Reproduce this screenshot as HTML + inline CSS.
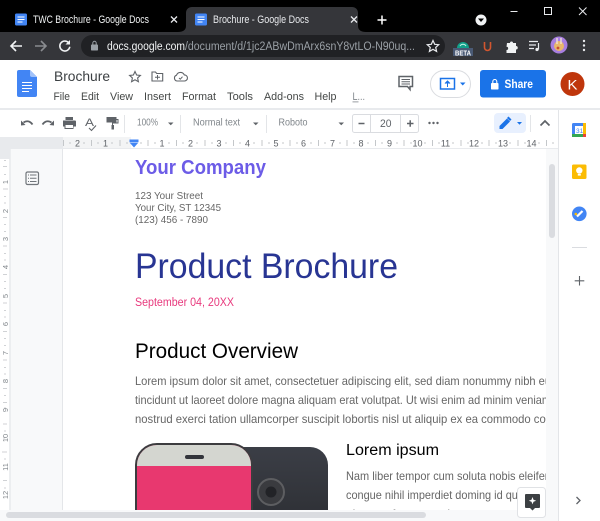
<!DOCTYPE html>
<html><head><meta charset="utf-8"><style>
html,body{margin:0;padding:0;background:#fff;overflow:hidden}
svg{display:block;filter:blur(.3px)}
text{font-family:"Liberation Sans",sans-serif;white-space:pre}
</style></head><body>
<svg xmlns="http://www.w3.org/2000/svg" width="600" height="521" viewBox="0 0 600 521">
<defs>
<clipPath id="pg"><rect x="63" y="149" width="483" height="361"/></clipPath>
<linearGradient id="dk" x1="0" y1="0" x2="0" y2="1"><stop offset="0" stop-color="#3b3e46"/><stop offset="1" stop-color="#2e3035"/></linearGradient>
</defs>
<rect width="600" height="521" fill="#fff"/>
<!-- tab strip -->
<rect width="600" height="32" fill="#000"/>
<path d="M178 32c5 0 8-2 8-6V13c0-4 3-6 6-6h160c3 0 6 2 6 6v13c0 4 3 6 8 6z" fill="#35363a"/>
<rect x="15" y="13.500" width="12" height="12" rx="1.500" fill="#4285f4"/><path d="M17.500 17h7M17.500 19.500h7M17.500 22h5" stroke="#fff" stroke-width="1.100"/>
<rect x="195" y="13.500" width="12" height="12" rx="1.500" fill="#4285f4"/><path d="M197.500 17h7M197.500 19.500h7M197.500 22h5" stroke="#fff" stroke-width="1.100"/>
<text x="33" y="23" font-size="11" fill="#f1f3f4" textLength="116" lengthAdjust="spacingAndGlyphs">TWC Brochure - Google Docs</text>
<path d="M171 16.500l6 6m0-6l-6 6" stroke="#e8eaed" stroke-width="1.300"/>
<text x="213" y="23" font-size="11" fill="#e8eaed" textLength="96" lengthAdjust="spacingAndGlyphs">Brochure - Google Docs</text>
<path d="M351 16.500l6 6m0-6l-6 6" stroke="#e8eaed" stroke-width="1.300"/>
<path d="M377.500 20h9M382 15.500v9" stroke="#fff" stroke-width="1.500"/>
<circle cx="481" cy="20" r="5.500" fill="#f1f3f4"/><path d="M478 18.500h6l-3 3.500z" fill="#000"/>
<path d="M510.500 11.500h7" stroke="#e8eaed" stroke-width="1"/>
<rect x="544.500" y="7.500" width="7" height="7" fill="none" stroke="#e8eaed"/>
<path d="M579 7.500l7.500 7.500m0-7.500L579 15" stroke="#e8eaed" stroke-width="1"/>
<!-- omnibar -->
<rect y="32" width="600" height="28" fill="#35363a"/>
<path d="M11 46h11M16 41l-5 5 5 5" fill="none" stroke="#f1f3f4" stroke-width="1.600"/>
<path d="M35 46h11M41 41l5 5-5 5" fill="none" stroke="#8a8c90" stroke-width="1.600"/>
<path d="M69 43.200a5 5 0 1 0 .8 3.600" fill="none" stroke="#f1f3f4" stroke-width="1.600"/><path d="M70 40v4.500h-4.500z" fill="#f1f3f4"/>
<rect x="81" y="35" width="364" height="22" rx="11" fill="#202124"/>
<rect x="91" y="44.500" width="7" height="6" rx=".8" fill="#9aa0a6"/><path d="M92.800 44.500v-1.500a1.700 1.700 0 0 1 3.400 0v1.500" fill="none" stroke="#9aa0a6"/>
<text x="107" y="50" font-size="11.500" fill="#f1f3f4" textLength="78" lengthAdjust="spacingAndGlyphs">docs.google.com</text>
<text x="185" y="50" font-size="11.500" fill="#9aa0a6" textLength="230" lengthAdjust="spacingAndGlyphs">/document/d/1jc2ABwDmArx6snY8vtLO-N90uq...</text>
<path d="M433 40.500l1.700 3.800 4 .4-3 2.700.9 4-3.600-2.100-3.600 2.100.9-4-3-2.700 4-.4z" fill="none" stroke="#e8eaed" stroke-width="1.200"/>
<path d="M457 48a6 6 0 0 1 12 0z" fill="#11a08a"/><path d="M460 46a3.500 3.500 0 0 1 6 0" fill="none" stroke="#bff0e4" stroke-width="1"/>
<rect x="453" y="48" width="20" height="8" fill="#4a5a75"/>
<text x="455" y="55.500" font-size="7.500" font-weight="bold" fill="#fff" textLength="16" lengthAdjust="spacingAndGlyphs">BETA</text>
<path d="M484.500 42v5.500a3 3 0 0 0 6 0V42" fill="none" stroke="#d2562f" stroke-width="1.600"/>
<path d="M507 43h3a1.500 1.500 0 0 1 3 0h3v3a1.500 1.500 0 0 1 0 3.500v3.500h-9.500v-3a1.600 1.600 0 0 0 0-3.300z" fill="#f1f3f4"/>
<path d="M529 41.500h9M529 45h7M529 48.500h5" stroke="#e8eaed" stroke-width="1.200"/><path d="M538.500 43v6.500" stroke="#e8eaed" stroke-width="1.200"/><circle cx="537" cy="49.500" r="1.600" fill="#e8eaed"/>
<circle cx="559" cy="45" r="8.500" fill="#a87fe0"/><circle cx="559" cy="46" r="5" fill="#e9b86b"/><path d="M557 38v6M561 38v6" stroke="#f3e7d6" stroke-width="1.300"/><circle cx="558" cy="48" r="1.400" fill="#c9502f"/>
<circle cx="584" cy="41" r="1.200" fill="#e8eaed"/><circle cx="584" cy="45.500" r="1.200" fill="#e8eaed"/><circle cx="584" cy="50" r="1.200" fill="#e8eaed"/>
<!-- header -->
<path d="M19 70h11l7 7v18a2 2 0 0 1-2 2H19a2 2 0 0 1-2-2V72a2 2 0 0 1 2-2z" fill="#4285f4"/><path d="M30 70l7 7h-5a2 2 0 0 1-2-2z" fill="#a1c2fa"/>
<path d="M22 82.500h10M22 85.500h10M22 88.500h10M22 91.500h7" stroke="#fff" stroke-width="1.100"/>
<text x="54" y="81" font-size="14" fill="#3c4043" textLength="56" lengthAdjust="spacingAndGlyphs">Brochure</text>
<path d="M135 71.500l1.600 3.500 3.800.4-2.800 2.600.8 3.700-3.400-1.900-3.400 1.900.8-3.700-2.800-2.600 3.800-.4z" fill="none" stroke="#5f6368" stroke-width="1.100"/>
<path d="M152 72h3.500l1.200 1.500h6v7.500h-10.700z" fill="none" stroke="#5f6368" stroke-width="1.100"/><path d="M157.500 75v4.500M155 77.200h5" stroke="#5f6368"/>
<path d="M177 81a3 3 0 0 1-.5-5.800 4.200 4.200 0 0 1 7.800-.3 3 3 0 0 1 .2 6.100z" fill="none" stroke="#5f6368" stroke-width="1.100"/><path d="M179 78l1.300 1.200 2.200-2.500" fill="none" stroke="#5f6368"/>
<g font-size="11" fill="#444746">
<text x="53.500" y="100" textLength="16.500" lengthAdjust="spacingAndGlyphs">File</text>
<text x="81" y="100" textLength="18" lengthAdjust="spacingAndGlyphs">Edit</text>
<text x="110" y="100" textLength="23" lengthAdjust="spacingAndGlyphs">View</text>
<text x="144" y="100" textLength="27" lengthAdjust="spacingAndGlyphs">Insert</text>
<text x="182" y="100" textLength="34" lengthAdjust="spacingAndGlyphs">Format</text>
<text x="227" y="100" textLength="26" lengthAdjust="spacingAndGlyphs">Tools</text>
<text x="264" y="100" textLength="40" lengthAdjust="spacingAndGlyphs">Add-ons</text>
<text x="314.500" y="100" textLength="22" lengthAdjust="spacingAndGlyphs">Help</text>
<text x="352.500" y="100" fill="#80868b" textLength="12.500" lengthAdjust="spacingAndGlyphs">L...</text>
</g>
<rect x="352.500" y="101.500" width="6" height=".8" fill="#80868b"/>
<path d="M399 76.500h13.500v10h-2.500v3l-2.500-3H399z" fill="none" stroke="#5f6368" stroke-width="1.500"/><path d="M401.500 79.500h8.500M401.500 81.700h8.500M401.500 84h8.500" stroke="#5f6368"/>
<rect x="430.500" y="70.500" width="40" height="27" rx="13.500" fill="#fff" stroke="#dadce0"/>
<rect x="440.500" y="78.500" width="14" height="10.500" fill="none" stroke="#1a73e8" stroke-width="1.500"/><path d="M447.500 87v-5M445 83.500l2.500-2.500 2.500 2.500" fill="#1a73e8" stroke="#1a73e8"/>
<path d="M460 82.500h5.500l-2.750 3z" fill="#1a73e8"/>
<rect x="480" y="70" width="66" height="27.500" rx="3" fill="#1a73e8"/>
<rect x="491" y="83" width="7.500" height="6.500" rx=".8" fill="#fff"/><path d="M492.800 83v-1.500a2 2 0 0 1 4 0V83" fill="none" stroke="#fff" stroke-width="1.100"/>
<text x="504.500" y="88" font-size="11.500" font-weight="bold" fill="#fff" textLength="28.500" lengthAdjust="spacingAndGlyphs">Share</text>
<circle cx="572.500" cy="84" r="12" fill="#bf360c"/>
<text x="567.500" y="89.500" font-size="14" fill="#fff" textLength="10" lengthAdjust="spacingAndGlyphs">K</text>
<!-- toolbar -->
<rect y="108" width="600" height="2" fill="#e8eaed"/>
<path d="M21 125.500v-5l4.500 4.500z" fill="#5f6368"/><path d="M23.500 122.500c3-2 6.500-1.500 9 2" fill="none" stroke="#5f6368" stroke-width="1.800"/>
<path d="M54 125.500v-5l-4.500 4.500z" fill="#5f6368"/><path d="M51.500 122.500c-3-2-6.500-1.500-9 2" fill="none" stroke="#5f6368" stroke-width="1.800"/>
<path d="M63 120.500h12a1 1 0 0 1 1 1v5h-2.500v2.500h-9v-2.500H63z" fill="#5f6368"/><rect x="65.500" y="117" width="7.500" height="3" fill="#5f6368"/><rect x="65.500" y="125" width="7.500" height="3" fill="#fff"/>
<text x="85" y="126" font-size="11" fill="#5f6368" textLength="9" lengthAdjust="spacingAndGlyphs">A</text><path d="M89 128l2.500 2.500 4.500-5" fill="none" stroke="#5f6368" stroke-width="1.100"/>
<rect x="106.500" y="117" width="10" height="5.500" fill="#5f6368"/><path d="M116.500 119.500h1.500v3.500h-5.500v2" fill="none" stroke="#5f6368"/><rect x="111.500" y="125" width="2.500" height="4.500" fill="#5f6368"/>
<rect x="124" y="115" width="1" height="18" fill="#e3e5e8"/><rect x="180" y="115" width="1" height="18" fill="#e3e5e8"/><rect x="266" y="115" width="1" height="18" fill="#e3e5e8"/>
<g font-size="10.500" fill="#80868b">
<text x="137" y="125.500" textLength="21" lengthAdjust="spacingAndGlyphs">100%</text>
<text x="193" y="125.500" textLength="47" lengthAdjust="spacingAndGlyphs">Normal text</text>
<text x="278.500" y="125.500" textLength="29" lengthAdjust="spacingAndGlyphs">Roboto</text>
</g>
<path d="M168 122.500h5.500l-2.750 2.700zM253 122.500h5.500l-2.750 2.700zM338.500 122.500h5.500l-2.750 2.700z" fill="#5f6368"/>
<rect x="352.500" y="114.500" width="66" height="18" rx="2" fill="#fff" stroke="#dadce0"/><path d="M370.500 114.500v18M400.500 114.500v18" stroke="#dadce0"/>
<text x="380" y="127" font-size="11" fill="#5f6368" textLength="11.500" lengthAdjust="spacingAndGlyphs">20</text>
<path d="M358.500 123.500h6M407 123.500h6.500M410.200 120.300v6.500" stroke="#5f6368" stroke-width="1.500"/>
<circle cx="429.500" cy="123" r="1.200" fill="#5f6368"/><circle cx="433.500" cy="123" r="1.200" fill="#5f6368"/><circle cx="437.500" cy="123" r="1.200" fill="#5f6368"/>
<rect x="494" y="113" width="32" height="20" rx="4" fill="#e8f0fe"/>
<path d="M499.500 129v-3l7.500-7.500 3 3-7.500 7.500z" fill="#1a73e8"/><path d="M507 118l1.500-1.500 3 3-1.500 1.500z" fill="#1a73e8"/>
<path d="M517 122h5l-2.500 2.700z" fill="#1a73e8"/>
<rect x="530" y="115" width="1" height="17" fill="#e3e5e8"/>
<path d="M540.500 125.500l4.500-4.500 4.500 4.500" fill="none" stroke="#5f6368" stroke-width="1.700"/>
<!-- ruler -->
<rect y="137" width="63" height="12" fill="#e8eaed"/>
<rect x="63" y="137" width="495" height="12" fill="#fff"/>
<rect x="63" y="137" width="68" height="11" fill="#f3f4f5"/>
<rect y="148" width="558" height="1" fill="#e8eaed"/>
<g stroke="#c4c7ca" stroke-width="1">
<path d="M63.500 140v6M91.500 140v6M120 140v6M148 140v6M176.500 140v6M205 140v6M233.500 140v6M262 140v6M290 140v6M318.500 140v6M347 140v6M375.500 140v6M404 140v6M432.500 140v6M461 140v6M489 140v6M518 140v6M546.500 140v6"/>
<path d="M70 142v2M84 142v2M98 142v2M112 142v2M127 142v2M141 142v2M155 142v2M169 142v2M183 142v2M197 142v2M212 142v2M226 142v2M240 142v2M254 142v2M269 142v2M283 142v2M297 142v2M311 142v2M325 142v2M340 142v2M354 142v2M368 142v2M382 142v2M397 142v2M411 142v2M425 142v2M439 142v2M453 142v2M468 142v2M482 142v2M496 142v2M510 142v2M525 142v2M539 142v2M553 142v2"/>
</g>
<g font-size="9" fill="#5f6368" text-anchor="middle">
<text x="77.500" y="146.500">2</text><text x="105.500" y="146.500">1</text><text x="162" y="146.500">1</text><text x="190.500" y="146.500">2</text><text x="219" y="146.500">3</text><text x="247.500" y="146.500">4</text><text x="276" y="146.500">5</text><text x="303.500" y="146.500">6</text><text x="332.500" y="146.500">7</text><text x="361" y="146.500">8</text><text x="389.500" y="146.500">9</text><text x="417.500" y="146.500">10</text><text x="445.500" y="146.500">11</text><text x="474" y="146.500">12</text><text x="503" y="146.500">13</text><text x="531.500" y="146.500">14</text>
</g>
<path d="M129.500 139.500h9v2.500h-9z" fill="#4285f4"/><path d="M129.500 142.500h9l-4.500 5z" fill="#4285f4"/>
<!-- left -->
<rect y="149" width="10" height="361" fill="#fff"/>
<rect x="10" y="149" width="52" height="361" fill="#f8f9fa"/>
<rect x="9" y="149" width="2" height="361" fill="#eceef0"/>
<rect x="62" y="149" width="1" height="361" fill="#e4e6e9"/>
<rect y="149" width="10" height="10" fill="#e8eaed"/>
<rect x="26" y="172" width="12.500" height="12.500" rx="1.500" fill="none" stroke="#70757a" stroke-width="1.200"/>
<path d="M28 175h1M30 175h6.500M28 178.200h1M30 178.200h6.500M28 181.500h1M30 181.500h6.500" stroke="#70757a"/>
<g stroke="#d0d2d5">
<path d="M4 160.500h2M3 166.500h4M4 174.500h2M3 189h5M4 196.500h2M4 203h2M3 217.500h4M4 224.500h2M4 231.500h2M3 246h4M4 253.500h2M4 260h2M3 274.500h4M4 281.500h2M4 288.500h2M3 303h4M4 310.500h2M4 317h2M3 331.500h4M4 338.500h2M4 345.500h2M3 360h4M4 367.500h2M4 374h2M3 388.500h4M4 395.500h2M3 402.500h4M4 408h2M3 424h4M4 431h2M3 438h2M2 452h5M4 459h2M3 480.500h4M4 488h2"/>
</g>
<g font-size="7.500" fill="#80868b" text-anchor="middle">
<text transform="translate(8,182) rotate(-90)">1</text>
<text transform="translate(8,211) rotate(-90)">2</text>
<text transform="translate(8,239) rotate(-90)">3</text>
<text transform="translate(8,267) rotate(-90)">4</text>
<text transform="translate(8,296) rotate(-90)">5</text>
<text transform="translate(8,324) rotate(-90)">6</text>
<text transform="translate(8,353) rotate(-90)">7</text>
<text transform="translate(8,381) rotate(-90)">8</text>
<text transform="translate(8,410) rotate(-90)">9</text>
<text transform="translate(8,438) rotate(-90)">10</text>
<text transform="translate(8,467) rotate(-90)">11</text>
<text transform="translate(8,495) rotate(-90)">12</text>
</g>
<!-- page -->
<g clip-path="url(#pg)">
<text x="135" y="174" font-size="20" font-weight="bold" fill="#6c5ce7" textLength="131" lengthAdjust="spacingAndGlyphs">Your Company</text>
<g font-size="10.500" fill="#666">
<text x="135" y="199" textLength="68" lengthAdjust="spacingAndGlyphs">123 Your Street</text>
<text x="135" y="211" textLength="86" lengthAdjust="spacingAndGlyphs">Your City, ST 12345</text>
<text x="135" y="223" textLength="73" lengthAdjust="spacingAndGlyphs">(123) 456 - 7890</text>
</g>
<text x="135" y="278" font-size="35" fill="#283593" textLength="263" lengthAdjust="spacingAndGlyphs">Product Brochure</text>
<text x="135" y="306" font-size="11.500" fill="#e8397d" textLength="99" lengthAdjust="spacingAndGlyphs">September 04, 20XX</text>
<text x="135" y="358" font-size="21.500" fill="#000" textLength="163" lengthAdjust="spacingAndGlyphs">Product Overview</text>
<g font-size="12" fill="#666">
<text x="135" y="385" textLength="416" lengthAdjust="spacingAndGlyphs">Lorem ipsum dolor sit amet, consectetuer adipiscing elit, sed diam nonummy nibh eu</text>
<text x="135" y="404" textLength="416" lengthAdjust="spacingAndGlyphs">tincidunt ut laoreet dolore magna aliquam erat volutpat. Ut wisi enim ad minim veniam</text>
<text x="135" y="423" textLength="417" lengthAdjust="spacingAndGlyphs">nostrud exerci tation ullamcorper suscipit lobortis nisl ut aliquip ex ea commodo con</text>
<text x="346" y="480" textLength="211" lengthAdjust="spacingAndGlyphs">Nam liber tempor cum soluta nobis eleifend</text>
<text x="346" y="499" textLength="184" lengthAdjust="spacingAndGlyphs">congue nihil imperdiet doming id quod</text>
<text x="346" y="518">placerat facer possim</text>
</g>
<text x="346" y="455" font-size="15.500" fill="#000" textLength="93" lengthAdjust="spacingAndGlyphs">Lorem ipsum</text>
<path d="M200 447h110a18 18 0 0 1 18 18v55H200z" fill="url(#dk)"/>
<circle cx="271" cy="492" r="13" fill="#3a3b3f" stroke="#5d5e61" stroke-width="2"/><circle cx="271" cy="492" r="5.500" fill="#222327"/>
<path d="M136 520v-55a21 21 0 0 1 21-21h74a21 21 0 0 1 21 21v55z" fill="#e8386f" stroke="#3c3c3f" stroke-width="2"/>
<path d="M137 466v-1a20 20 0 0 1 20-20h74a20 20 0 0 1 20 20v1z" fill="#d4d6d0"/>
<rect x="185" y="455" width="19" height="4" rx="2" fill="#33353b"/>
</g>
<!-- v scrollbar -->
<rect x="546" y="149" width="12" height="361" fill="#f8f9fa"/>
<rect x="549" y="164" width="6" height="74" rx="3" fill="#dadce0"/>
<!-- side panel -->
<rect x="558" y="110" width="1" height="411" fill="#e3e5e8"/>
<rect x="572" y="123" width="14" height="14" rx="1.500" fill="#4285f4"/><rect x="572" y="134" width="14" height="3" fill="#34a853"/><rect x="583" y="123" width="3" height="14" fill="#fbbc04"/><rect x="575" y="126" width="8" height="8" fill="#fff"/>
<text x="576" y="133" font-size="6.500" fill="#4285f4">31</text><rect x="583" y="134" width="3" height="3" fill="#ea4335"/>
<rect x="572" y="164.500" width="14.500" height="14.500" rx="1.500" fill="#fbbc04"/><circle cx="579.300" cy="170.500" r="3.200" fill="#fff"/><rect x="577.800" y="174" width="3" height="1.600" fill="#fff"/>
<circle cx="579.300" cy="213.800" r="7.300" fill="#4285f4"/><path d="M577 216.500l5.500-5.500" stroke="#fff" stroke-width="2.200"/><circle cx="575.800" cy="214" r="1.300" fill="#fbbc04"/>
<rect x="572" y="247" width="15" height="1" fill="#dadce0"/>
<path d="M579.500 276v9.500M574.700 280.800h9.600" stroke="#5f6368" stroke-width="1.100"/>
<path d="M576.500 497l3.500 3.500-3.500 3.500" fill="none" stroke="#5f6368" stroke-width="1.300"/>
<!-- h scrollbar -->
<rect y="510" width="558" height="11" fill="#f8f9fa"/>
<rect x="6" y="512" width="420" height="6" rx="3" fill="#dadce0"/>
<!-- float button -->
<rect x="517.500" y="487.500" width="28" height="30" rx="3" fill="#fff" stroke="#e0e2e5"/>
<path d="M526 494h13a1 1 0 0 1 1 1v12a1 1 0 0 1-1 1h-4l-2.500 2.500-2.500-2.500h-4a1 1 0 0 1-1-1v-12a1 1 0 0 1 1-1z" fill="#3c4043"/>
<path d="M532.500 497l1 2.700 2.700 1-2.700 1-1 2.700-1-2.700-2.700-1 2.700-1z" fill="#fff"/>
</svg>
</body></html>
